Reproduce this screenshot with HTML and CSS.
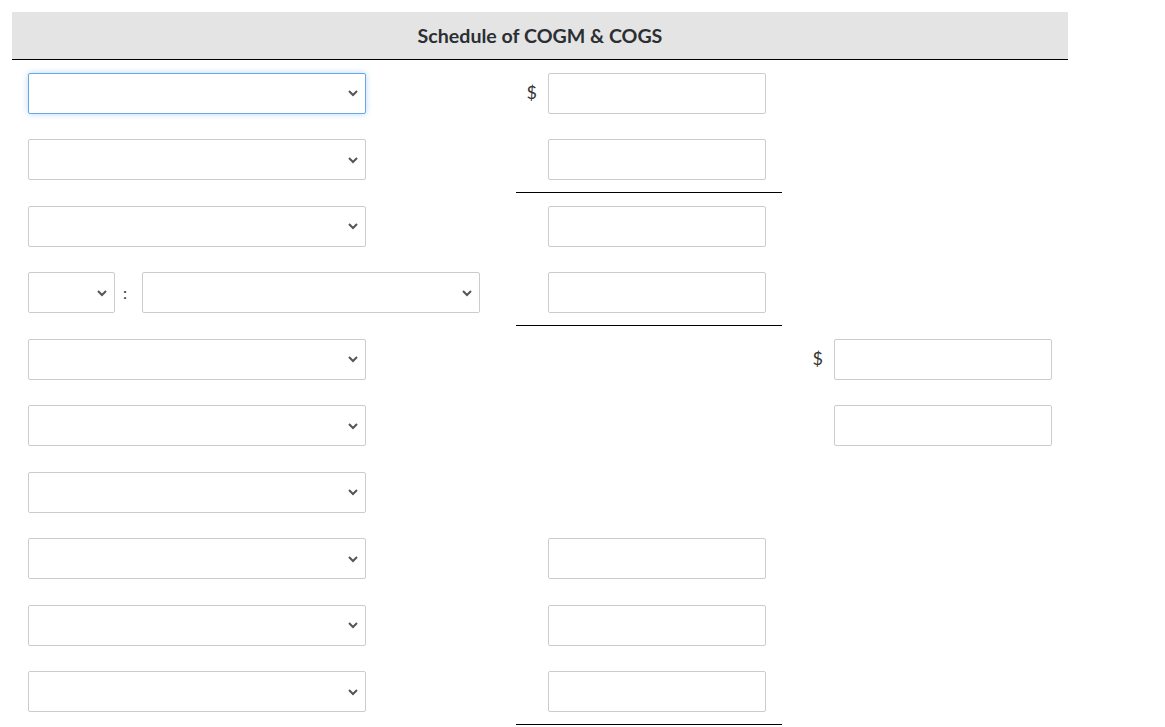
FILE: index.html
```html
<!DOCTYPE html>
<html>
<head>
<meta charset="utf-8">
<link rel="stylesheet" href="styles.css">
</head>
<body>
<div class="sheet">
  <div class="header">Schedule of COGM &amp; COGS</div>
  <div class="grid">
    <!-- row 1 -->
    <div class="c1"><div class="sel wide focus"><svg class="chev" viewBox="0 0 10 6"><path d="M1 1l4 4 4-4"/></svg></div></div>
    <div class="c2 dollar">$</div>
    <div class="c3"><div class="inp"></div></div>
    <div class="c4"></div><div class="c5"></div>
    <!-- row 2 -->
    <div class="c1"><div class="sel wide"><svg class="chev" viewBox="0 0 10 6"><path d="M1 1l4 4 4-4"/></svg></div></div>
    <div class="c2 line"></div>
    <div class="c3 line"><div class="inp"></div></div>
    <div class="c4"></div><div class="c5"></div>
    <!-- row 3 -->
    <div class="c1"><div class="sel wide"><svg class="chev" viewBox="0 0 10 6"><path d="M1 1l4 4 4-4"/></svg></div></div>
    <div class="c2"></div>
    <div class="c3"><div class="inp"></div></div>
    <div class="c4"></div><div class="c5"></div>
    <!-- row 4 -->
    <div class="c1 pair">
      <div class="sel small"><svg class="chev" viewBox="0 0 10 6"><path d="M1 1l4 4 4-4"/></svg></div>
      <span class="colon">:</span>
      <div class="sel wide"><svg class="chev" viewBox="0 0 10 6"><path d="M1 1l4 4 4-4"/></svg></div>
    </div>
    <div class="c2 line"></div>
    <div class="c3 line"><div class="inp"></div></div>
    <div class="c4"></div><div class="c5"></div>
    <!-- row 5 -->
    <div class="c1"><div class="sel wide"><svg class="chev" viewBox="0 0 10 6"><path d="M1 1l4 4 4-4"/></svg></div></div>
    <div class="c2"></div><div class="c3"></div>
    <div class="c4 dollar">$</div>
    <div class="c5"><div class="inp"></div></div>
    <!-- row 6 -->
    <div class="c1"><div class="sel wide"><svg class="chev" viewBox="0 0 10 6"><path d="M1 1l4 4 4-4"/></svg></div></div>
    <div class="c2"></div><div class="c3"></div>
    <div class="c4"></div>
    <div class="c5"><div class="inp"></div></div>
    <!-- row 7 -->
    <div class="c1"><div class="sel wide"><svg class="chev" viewBox="0 0 10 6"><path d="M1 1l4 4 4-4"/></svg></div></div>
    <div class="c2"></div><div class="c3"></div>
    <div class="c4"></div><div class="c5"></div>
    <!-- row 8 -->
    <div class="c1"><div class="sel wide"><svg class="chev" viewBox="0 0 10 6"><path d="M1 1l4 4 4-4"/></svg></div></div>
    <div class="c2"></div>
    <div class="c3"><div class="inp"></div></div>
    <div class="c4"></div><div class="c5"></div>
    <!-- row 9 -->
    <div class="c1"><div class="sel wide"><svg class="chev" viewBox="0 0 10 6"><path d="M1 1l4 4 4-4"/></svg></div></div>
    <div class="c2"></div>
    <div class="c3"><div class="inp"></div></div>
    <div class="c4"></div><div class="c5"></div>
    <!-- row 10 -->
    <div class="c1"><div class="sel wide"><svg class="chev" viewBox="0 0 10 6"><path d="M1 1l4 4 4-4"/></svg></div></div>
    <div class="c2 line"></div>
    <div class="c3 line"><div class="inp"></div></div>
    <div class="c4"></div><div class="c5"></div>
  </div>
</div>
</body>
</html>
```

FILE: styles.css
```css
html, body {
  margin: 0;
  padding: 0;
  background: #fff;
}
body {
  padding: 12px;
  font-family: Lato, "Liberation Sans", sans-serif;
  color: #333;
}
.sheet {
  width: 1056px;
}
.header {
  box-sizing: border-box;
  height: 48px;
  background: #e4e4e4;
  border-bottom: 1px solid #000;
  display: flex;
  align-items: center;
  justify-content: center;
  font-weight: 700;
  font-size: 19.6px;
  color: #2b2f33;
}
.grid {
  display: grid;
  grid-template-columns: 504px 32px 234px 52px 234px;
  grid-auto-rows: 66.5px;
}
.grid > div {
  box-sizing: border-box;
  display: flex;
  align-items: center;
}
.c1 {
  padding-left: 16px;
}
.sel {
  box-sizing: border-box;
  height: 41px;
  border: 1px solid #ccc;
  border-radius: 2px;
  background: #fff;
  display: flex;
  align-items: center;
  justify-content: flex-end;
  padding-right: 7px;
}
.sel.wide {
  width: 338px;
}
.sel.small {
  width: 87px;
}
.sel.focus {
  border-color: #66a8e8;
  box-shadow: 0 0 6px rgba(102, 168, 232, 0.45);
}
.chev {
  width: 10px;
  height: 6px;
  fill: none;
  stroke: #555;
  stroke-width: 2;
  overflow: visible;
}
.colon {
  box-sizing: border-box;
  width: 27px;
  padding-left: 8px;
  text-align: left;
  font-size: 16px;
  color: #333;
}
.dollar {
  justify-content: flex-end;
  padding-right: 11px;
  padding-bottom: 3px;
  font-size: 18px;
  color: #333;
}
.inp {
  box-sizing: border-box;
  width: 218px;
  height: 41px;
  border: 1px solid #ccc;
  border-radius: 2px;
  background: #fff;
}
.line {
  border-bottom: 1px solid #000;
}
```
